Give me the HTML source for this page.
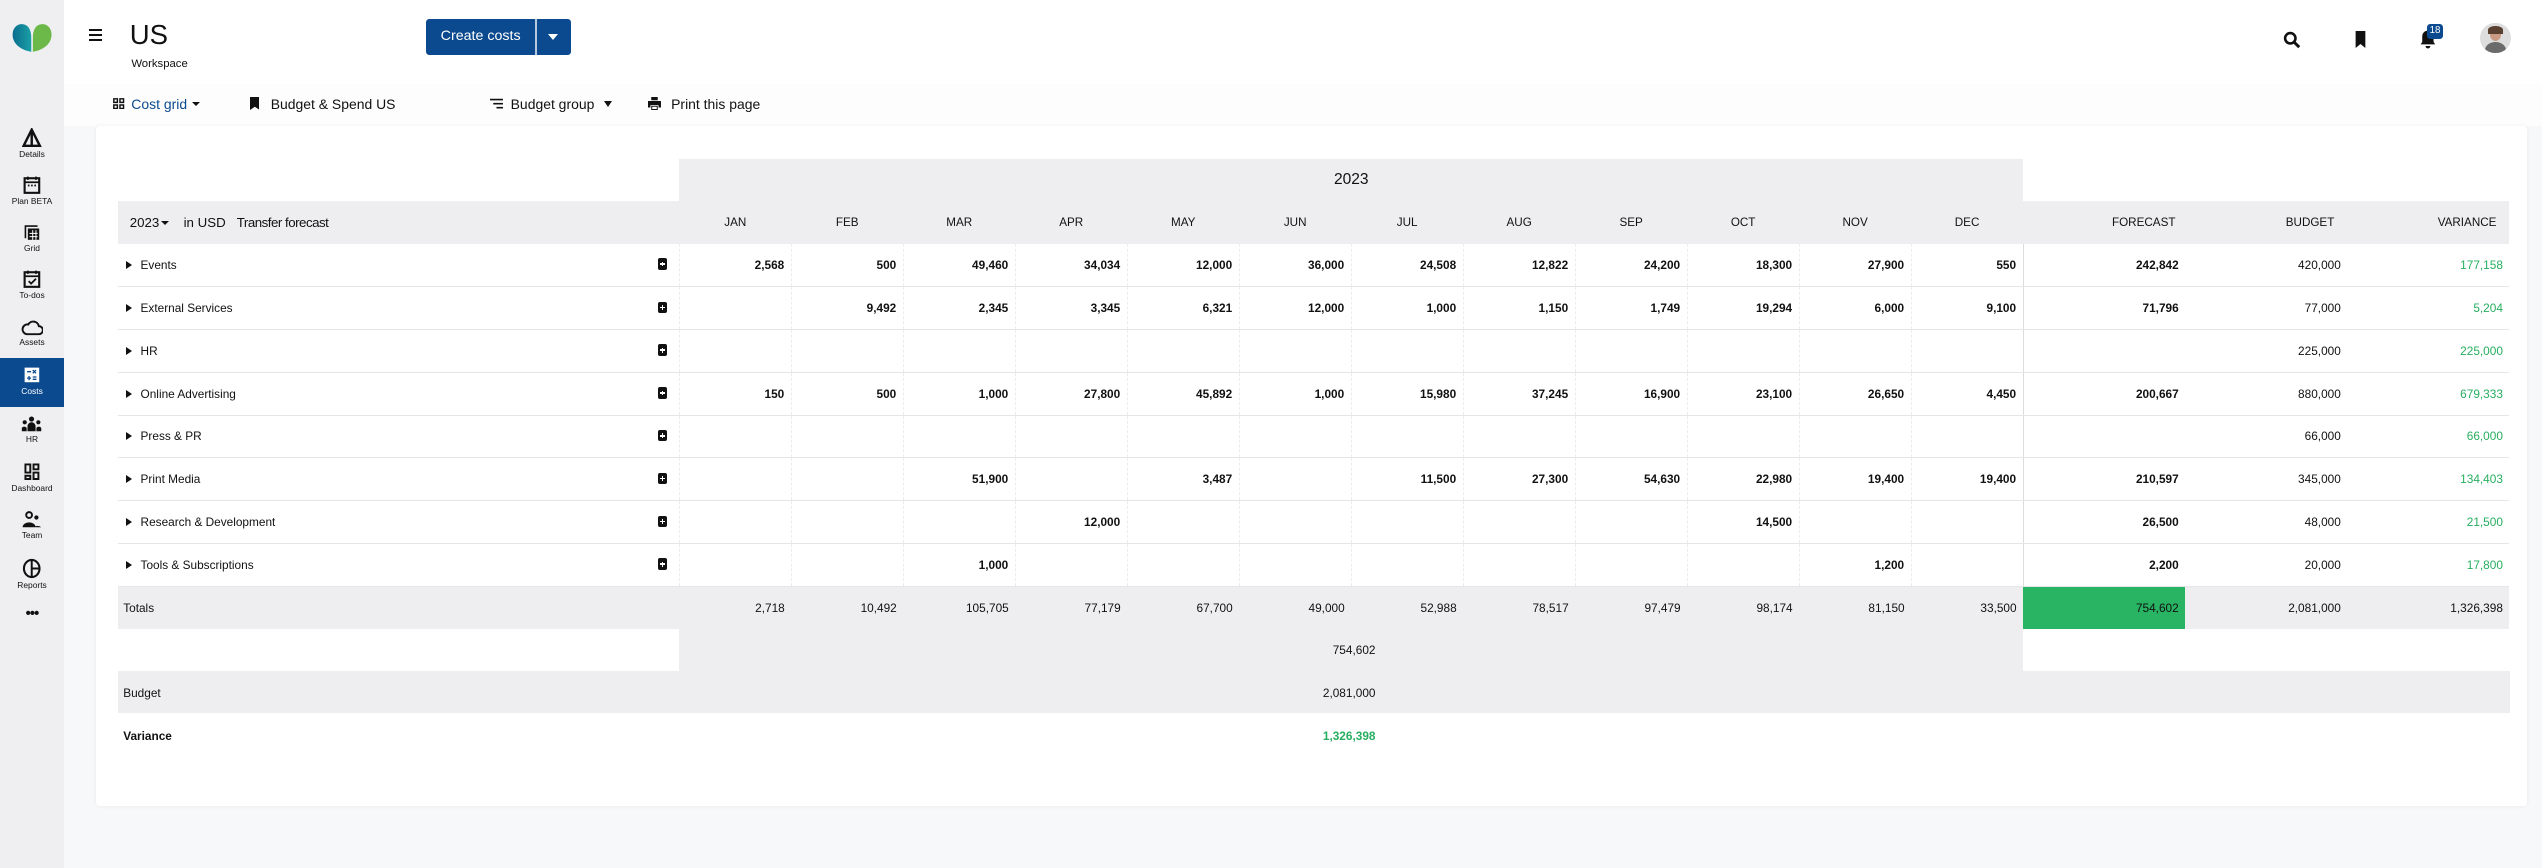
<!DOCTYPE html>
<html><head><meta charset="utf-8"><style>
*{box-sizing:border-box;margin:0;padding:0}
html,body{width:2542px;height:868px;overflow:hidden;background:#f7f8fa;font-family:"Liberation Sans",Arial,sans-serif;color:#111}
#z{zoom:1.62117;width:1568px;height:535.4px;position:relative;background:#f7f8fa}
.a{position:absolute}
#side{left:0;top:0;width:39.5px;height:536px;background:#efeff1}
.si{position:absolute;left:0;width:39.5px;text-align:center;font-size:5.2px;color:#111}
.si svg{display:block;margin:0 auto 1px}
#hdr{left:39.5px;top:0;width:1529px;height:52px;background:#fff}
#tb{left:39.5px;top:52px;width:1529px;height:26px;background:#fdfdfd}
.tbi{position:absolute;top:59px;font-size:8.6px;color:#111;white-space:nowrap;display:flex;align-items:center;gap:5px}
#card{left:59px;top:78px;width:1500px;height:419px;background:#fff;box-shadow:0 0 3px rgba(0,0,0,.06);border-radius:2px}
table{position:absolute;left:73px;top:124px;border-collapse:collapse;table-layout:fixed;font-size:7.3px}
td{height:26.4px;padding:0 4px;text-align:right;white-space:nowrap;overflow:visible}
tr.b td{border-bottom:1px solid #e6e6e8}
tr.b td.m{border-left:1px dashed #ececec}
tr.b td.f{border-left:1px solid #dcdcdc;font-weight:bold}
tr.b td.m{font-weight:600}
td.l{text-align:left;padding-left:4px}
.g{color:#27ae60}
tr.h td{background:#eeeef0;text-align:center;font-size:7.2px}
tr.h td.r{text-align:right;padding-right:8px}
.pl{position:absolute;right:7px;top:9px;width:6px;height:7px;background:#111;border-radius:1.2px}
.pl:before{content:"";position:absolute;left:1.5px;top:3px;width:3px;height:1px;background:#fff}
.pl:after{content:"";position:absolute;left:2.5px;top:2px;width:1px;height:3px;background:#fff}
.tri{display:inline-block;width:0;height:0;border-top:3px solid transparent;border-bottom:3px solid transparent;border-left:4px solid #111;margin:0 5px 0 1px;vertical-align:0}
.sh{position:relative;left:19px}
</style></head><body><div id="z">
<div id="side" class="a"></div>
<svg class="a" style="left:7px;top:13px" width="26" height="20" viewBox="0 0 26 20"><defs><linearGradient id="lg" x1="0" x2="1"><stop offset="0" stop-color="#0c6d8f"/><stop offset="1" stop-color="#19a0a5"/></linearGradient></defs><path d="M12.5 19C6 18 1 14 1 8.5 1 4 4 1.5 7.5 2 11 2.5 12.5 6 12.5 10Z" fill="url(#lg)"/><path d="M13.5 19C20 18 25 14 25 8.5 25 4 22 1.5 18.5 2 15 2.5 13.5 6 13.5 10Z" fill="#6cb94a"/></svg>

<div class="si" style="top:79px"><svg width="12" height="12" viewBox="0 0 12 12"><path d="M6 1 11 11H1Z M6 1V11" fill="none" stroke="#111" stroke-width="1.5"/></svg>Details</div>
<div class="si" style="top:108px"><svg width="11" height="12" viewBox="0 0 11 12"><rect x="1" y="2" width="9" height="9" fill="none" stroke="#111" stroke-width="1.3"/><path d="M1 4.5h9M3 1v2M8 1v2M3 6.5h1M5 6.5h1M7 6.5h1" stroke="#111" stroke-width="1.1"/></svg>Plan BETA</div>
<div class="si" style="top:137px"><svg width="11" height="12" viewBox="0 0 11 12"><path d="M1 2v8h1V3h7V2Z" fill="#111"/><rect x="3" y="4" width="7" height="7" fill="#111"/><path d="M4 7h5M4 9h5M6 5v6M8 5v6" stroke="#fff" stroke-width=".6"/></svg>Grid</div>
<div class="si" style="top:166px"><svg width="11" height="12" viewBox="0 0 11 12"><rect x="1" y="2" width="9" height="9" fill="none" stroke="#111" stroke-width="1.3"/><path d="M1 4.5h9M3 1v2M8 1v2M3.5 7.5l1.5 1.5 3-3" stroke="#111" stroke-width="1.1" fill="none"/></svg>To-dos</div>
<div class="si" style="top:196px"><svg width="14" height="11" viewBox="0 0 14 11"><path d="M3.5 10H11a2.5 2.5 0 0 0 0-5 3.5 3.5 0 0 0-6.5-1A3 3 0 0 0 3.5 10Z" fill="none" stroke="#111" stroke-width="1.2"/></svg>Assets</div>
<div class="a" style="left:0;top:221px;width:39.5px;height:30px;background:#0b4a8f"></div>
<div class="si" style="top:226px;color:#fff"><svg width="11" height="11" viewBox="0 0 11 11"><rect x="1" y="1" width="9" height="9" fill="#fff"/><path d="M2.5 3.5h2.5M6 2.5l2 2M8 2.5l-2 2M2.5 7.5h2.5M3.75 6.2v2.6M6 6.8h2.3M6 8.2h2.3" stroke="#0b4a8f" stroke-width=".8"/></svg>Costs</div>
<div class="si" style="top:256px"><svg width="13" height="11" viewBox="0 0 13 11"><circle cx="6.5" cy="2.5" r="1.6" fill="#111"/><circle cx="2.3" cy="4.5" r="1.3" fill="#111"/><circle cx="10.7" cy="4.5" r="1.3" fill="#111"/><path d="M4 10V7a2.5 2.5 0 0 1 5 0v3Z M0.5 10V8a1.8 1.8 0 0 1 3 0v2Z M9.5 10V8a1.8 1.8 0 0 1 3 0v2Z" fill="#111"/></svg>HR</div>
<div class="si" style="top:285px"><svg width="11" height="12" viewBox="0 0 11 12"><path d="M1.5 1.5h3v5h-3ZM6.5 1.5h3v3h-3ZM1.5 8.5h3v2h-3ZM6.5 6.5h3v4h-3Z" fill="none" stroke="#111" stroke-width="1.2"/></svg>Dashboard</div>
<div class="si" style="top:315px"><svg width="13" height="11" viewBox="0 0 13 11"><circle cx="5" cy="2.5" r="1.8" fill="none" stroke="#111" stroke-width="1.2"/><circle cx="9.5" cy="4" r="1.3" fill="#111"/><path d="M1 10a4 3 0 0 1 8 0ZM8 10a3 2.5 0 0 1 4.5 0Z" fill="#111"/></svg>Team</div>
<div class="si" style="top:344px"><svg width="12" height="13" viewBox="0 0 12 13"><ellipse cx="6" cy="6.5" rx="4.8" ry="5.3" fill="none" stroke="#111" stroke-width="1.3"/><path d="M6 1.2v10.6M6 6.5h4.8" stroke="#111" stroke-width="1.2"/></svg>Reports</div>
<div class="si" style="top:374px;font-size:9px;font-weight:bold;letter-spacing:-.5px">•••</div>

<div id="hdr" class="a"></div>
<div class="a" style="left:55px;top:18px;width:8px"><div style="height:1.4px;background:#111;margin-bottom:1.6px"></div><div style="height:1.4px;background:#111;margin-bottom:1.6px"></div><div style="height:1.4px;background:#111"></div></div>
<div class="a" style="left:80px;top:12px;font-size:17px">US</div>
<div class="a" style="left:81px;top:36px;font-size:7px">Workspace</div>
<div class="a" style="left:263px;top:12px;width:89px;height:22px;background:#0b4a8f;border-radius:2px;color:#fff;font-size:8.8px"><div style="position:absolute;left:0;top:0;width:67px;height:22px;line-height:22px;text-align:center">Create costs</div><div style="position:absolute;left:67px;top:0;width:1px;height:22px;background:#fff;opacity:.7"></div><div style="position:absolute;left:75px;top:9px;border-left:3.5px solid transparent;border-right:3.5px solid transparent;border-top:4px solid #fff"></div></div>
<svg class="a" style="left:1408px;top:19px" width="11" height="11" viewBox="0 0 11 11"><circle cx="4.5" cy="4.5" r="3.2" fill="none" stroke="#111" stroke-width="1.6"/><path d="M7 7l3 3" stroke="#111" stroke-width="1.8"/></svg>
<svg class="a" style="left:1452px;top:19px" width="8" height="11" viewBox="0 0 8 11"><path d="M1 0h6v10.5L4 8 1 10.5Z" fill="#111"/></svg>
<svg class="a" style="left:1492px;top:18px" width="11" height="12" viewBox="0 0 11 12"><path d="M5.5 1a3.5 3.5 0 0 0-3.5 3.5V8L1 9.5h9L9 8V4.5A3.5 3.5 0 0 0 5.5 1ZM4 10.5a1.5 1.5 0 0 0 3 0Z" fill="#111"/></svg>
<div class="a" style="left:1497px;top:15px;width:10px;height:9px;background:#0b4a8f;border-radius:2px;color:#fff;font-size:6px;text-align:center;line-height:9px">18</div>
<div class="a" style="left:1530px;top:14px;width:19px;height:19px;border-radius:50%;background:#ddd;overflow:hidden"><div style="position:absolute;left:6px;top:3px;width:7px;height:8px;border-radius:50%;background:#c89b82"></div><div style="position:absolute;left:5px;top:2px;width:9px;height:5px;border-radius:50% 50% 0 0;background:#5a4030"></div><div style="position:absolute;left:3px;top:12px;width:13px;height:10px;border-radius:50% 50% 0 0;background:#6b6b6b"></div></div>

<div id="tb" class="a"></div>
<div class="tbi" style="left:70px;color:#0b4a8f"><svg width="7" height="7" viewBox="0 0 7 7"><path d="M.5.5h2.2v2.2H.5ZM4.3.5h2.2v2.2H4.3ZM.5 4.3h2.2v2.2H.5ZM4.3 4.3h2.2v2.2H4.3Z" fill="none" stroke="#111" stroke-width=".9"/></svg><span style="margin-left:-1px">Cost grid</span><span style="border-left:2.5px solid transparent;border-right:2.5px solid transparent;border-top:3px solid #111;margin-left:-2px"></span></div>
<div class="tbi" style="left:154px"><svg width="6" height="8" viewBox="0 0 6 8"><path d="M0 0h6v8L3 6 0 8Z" fill="#111"/></svg><span style="margin-left:2px">Budget &amp; Spend US</span></div>
<div class="tbi" style="left:302px"><svg width="8" height="7" viewBox="0 0 8 7"><path d="M0 1h8M2 3.5h6M4 6h4" stroke="#111" stroke-width="1"/></svg><span>Budget group</span><span style="border-left:3px solid transparent;border-right:3px solid transparent;border-top:4px solid #111;margin-left:1px"></span></div>
<div class="tbi" style="left:400px"><svg width="8" height="8" viewBox="0 0 8 8"><path d="M2 0h4v2H2ZM0 2.5h8v4H6.5V5h-5v1.5H0ZM2 5.5h4V8H2Z" fill="#111"/><rect x="2.6" y="6" width="2.8" height="1.4" fill="#fff"/></svg><span style="margin-left:1px">Print this page</span></div>

<div id="card" class="a"></div>
<div class="a" style="left:419px;top:98px;width:829px;height:26px;background:#eeeef0;text-align:center;font-size:9.6px;line-height:26px">2023</div>
<div class="a" style="left:419px;top:388px;width:829px;height:26px;background:#eeeef0"></div>
<div class="a" style="left:73px;top:414px;width:1475px;height:26px;background:#eeeef0"></div>

<table>
<colgroup><col style="width:346px"><col span="12" style="width:69.08px"><col span="3" style="width:100px"></colgroup>
<tr class="h"><td class="l" style="text-align:left;font-size:8.2px;padding-left:7px">2023<span style="display:inline-block;border-left:2.5px solid transparent;border-right:2.5px solid transparent;border-top:3px solid #111;vertical-align:1px;margin-left:1px"></span>&nbsp;&nbsp;&nbsp;&nbsp;in USD &nbsp;&nbsp;<span style="letter-spacing:-.3px">Transfer forecast</span></td><td>JAN</td><td>FEB</td><td>MAR</td><td>APR</td><td>MAY</td><td>JUN</td><td>JUL</td><td>AUG</td><td>SEP</td><td>OCT</td><td>NOV</td><td>DEC</td><td class="r" style="padding-right:6px">FORECAST</td><td class="r">BUDGET</td><td class="r">VARIANCE</td></tr>
<tr class="b"><td class="l" style="position:relative"><span class="tri"></span>Events<span class="pl"></span></td><td class="m">2,568</td><td class="m">500</td><td class="m">49,460</td><td class="m">34,034</td><td class="m">12,000</td><td class="m">36,000</td><td class="m">24,508</td><td class="m">12,822</td><td class="m">24,200</td><td class="m">18,300</td><td class="m">27,900</td><td class="m">550</td><td class="f">242,842</td><td>420,000</td><td class="g">177,158</td></tr>
<tr class="b"><td class="l" style="position:relative"><span class="tri"></span>External Services<span class="pl"></span></td><td class="m"></td><td class="m">9,492</td><td class="m">2,345</td><td class="m">3,345</td><td class="m">6,321</td><td class="m">12,000</td><td class="m">1,000</td><td class="m">1,150</td><td class="m">1,749</td><td class="m">19,294</td><td class="m">6,000</td><td class="m">9,100</td><td class="f">71,796</td><td>77,000</td><td class="g">5,204</td></tr>
<tr class="b"><td class="l" style="position:relative"><span class="tri"></span>HR<span class="pl"></span></td><td class="m"></td><td class="m"></td><td class="m"></td><td class="m"></td><td class="m"></td><td class="m"></td><td class="m"></td><td class="m"></td><td class="m"></td><td class="m"></td><td class="m"></td><td class="m"></td><td class="f"></td><td>225,000</td><td class="g">225,000</td></tr>
<tr class="b"><td class="l" style="position:relative"><span class="tri"></span>Online Advertising<span class="pl"></span></td><td class="m">150</td><td class="m">500</td><td class="m">1,000</td><td class="m">27,800</td><td class="m">45,892</td><td class="m">1,000</td><td class="m">15,980</td><td class="m">37,245</td><td class="m">16,900</td><td class="m">23,100</td><td class="m">26,650</td><td class="m">4,450</td><td class="f">200,667</td><td>880,000</td><td class="g">679,333</td></tr>
<tr class="b"><td class="l" style="position:relative"><span class="tri"></span>Press &amp; PR<span class="pl"></span></td><td class="m"></td><td class="m"></td><td class="m"></td><td class="m"></td><td class="m"></td><td class="m"></td><td class="m"></td><td class="m"></td><td class="m"></td><td class="m"></td><td class="m"></td><td class="m"></td><td class="f"></td><td>66,000</td><td class="g">66,000</td></tr>
<tr class="b"><td class="l" style="position:relative"><span class="tri"></span>Print Media<span class="pl"></span></td><td class="m"></td><td class="m"></td><td class="m">51,900</td><td class="m"></td><td class="m">3,487</td><td class="m"></td><td class="m">11,500</td><td class="m">27,300</td><td class="m">54,630</td><td class="m">22,980</td><td class="m">19,400</td><td class="m">19,400</td><td class="f">210,597</td><td>345,000</td><td class="g">134,403</td></tr>
<tr class="b"><td class="l" style="position:relative"><span class="tri"></span>Research &amp; Development<span class="pl"></span></td><td class="m"></td><td class="m"></td><td class="m"></td><td class="m">12,000</td><td class="m"></td><td class="m"></td><td class="m"></td><td class="m"></td><td class="m"></td><td class="m">14,500</td><td class="m"></td><td class="m"></td><td class="f">26,500</td><td>48,000</td><td class="g">21,500</td></tr>
<tr class="b"><td class="l" style="position:relative"><span class="tri"></span>Tools &amp; Subscriptions<span class="pl"></span></td><td class="m"></td><td class="m"></td><td class="m">1,000</td><td class="m"></td><td class="m"></td><td class="m"></td><td class="m"></td><td class="m"></td><td class="m"></td><td class="m"></td><td class="m">1,200</td><td class="m"></td><td class="f">2,200</td><td>20,000</td><td class="g">17,800</td></tr>
<tr style="background:#eeeef0"><td class="l" style="padding-left:3px">Totals</td><td>2,718</td><td>10,492</td><td>105,705</td><td>77,179</td><td>67,700</td><td>49,000</td><td>52,988</td><td>78,517</td><td>97,479</td><td>98,174</td><td>81,150</td><td>33,500</td><td style="background:#28b463">754,602</td><td>2,081,000</td><td>1,326,398</td></tr>
<tr><td></td><td></td><td></td><td></td><td></td><td></td><td><span class="sh">754,602</span></td><td></td><td></td><td></td><td></td><td></td><td></td><td></td><td></td><td></td></tr>
<tr><td class="l" style="padding-left:3px">Budget</td><td></td><td></td><td></td><td></td><td></td><td><span class="sh">2,081,000</span></td><td></td><td></td><td></td><td></td><td></td><td></td><td></td><td></td><td></td></tr>
<tr><td class="l" style="padding-left:3px;font-weight:bold">Variance</td><td></td><td></td><td></td><td></td><td></td><td class="g" style="font-weight:600"><span class="sh">1,326,398</span></td><td></td><td></td><td></td><td></td><td></td><td></td><td></td><td></td><td></td></tr>
</table>
</div></body></html>
